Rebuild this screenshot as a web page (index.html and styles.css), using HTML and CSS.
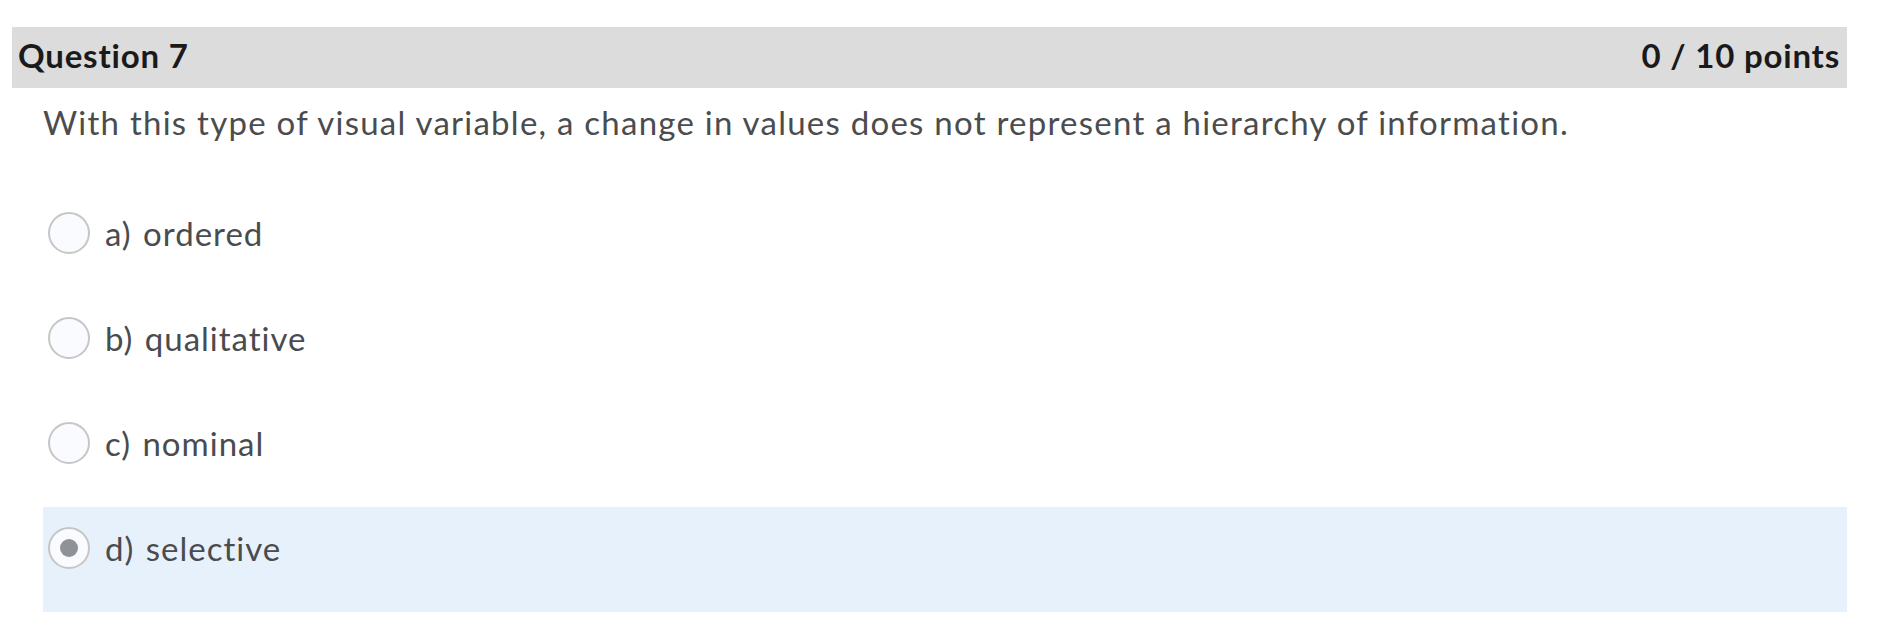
FILE: index.html
```html
<!DOCTYPE html>
<html lang="en">
<head>
<meta charset="utf-8">
<title>Question 7</title>
<link rel="stylesheet" href="styles.css">
</head>
<body>
<div class="quiz">
  <div class="q-header">
    <span class="q-title">Question 7</span>
    <span class="q-points">0 / 10 points</span>
  </div>
  <p class="q-text">With this type of visual variable, a change in values does not represent a hierarchy of information.</p>
  <div class="options">
    <div class="option">
      <span class="radio"></span>
      <span class="label">a) ordered</span>
    </div>
    <div class="option">
      <span class="radio"></span>
      <span class="label">b) qualitative</span>
    </div>
    <div class="option">
      <span class="radio"></span>
      <span class="label">c) nominal</span>
    </div>
    <div class="option selected">
      <span class="radio checked"></span>
      <span class="label">d) selective</span>
    </div>
  </div>
</div>
</body>
</html>
```
FILE: styles.css
```css
html, body {
  margin: 0;
  padding: 0;
  background: #ffffff;
}
body {
  font-family: Lato, "Noto Sans", sans-serif;
  font-variant-ligatures: none;
}
.quiz {
  padding: 27px 33px 0 12px;
}
.q-header {
  display: flex;
  justify-content: space-between;
  align-items: flex-start;
  height: 61px;
  box-sizing: border-box;
  padding: 9px 7px 0 6px;
  background: #dcdcdc;
  color: #1a1a1a;
  font-weight: 700;
  font-size: 33px;
  letter-spacing: 0.8px;
  line-height: 1.2;
}
.q-text {
  margin: 10px 0 0 31px;
  font-size: 33px;
  letter-spacing: 1.25px;
  line-height: 48px;
  color: #4a4c4e;
}
.options {
  margin: 46px 0 0 31px;
}
.option {
  display: flex;
  align-items: flex-start;
  height: 105px;
  box-sizing: border-box;
  padding: 20px 0 0 5px;
  color: #494c4e;
  font-size: 33px;
  letter-spacing: 1px;
  word-spacing: 2px;
}
.option.selected {
  background: #e7f1fb;
}
.radio {
  flex: none;
  width: 42px;
  height: 42px;
  box-sizing: border-box;
  border: 2px solid #c6c6c6;
  border-radius: 50%;
  background: #f9fbfe;
  display: flex;
  align-items: center;
  justify-content: center;
}
.radio.checked::after {
  content: "";
  width: 18px;
  height: 18px;
  border-radius: 50%;
  background: #8f9397;
}
.label {
  margin-left: 15px;
  line-height: 42px;
}
```
